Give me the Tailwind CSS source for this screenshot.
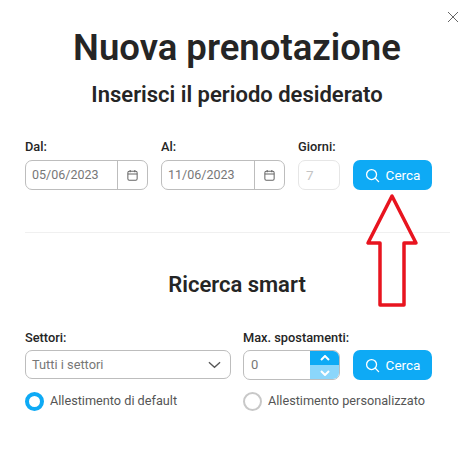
<!DOCTYPE html>
<html lang="en">
<head>
  <meta charset="UTF-8" />
  <title>Nuova prenotazione</title>
  <script src="https://cdn.jsdelivr.net/npm/@tailwindcss/browser@4"></script>
</head>
<body class="bg-white">
  <div class="relative w-[474px] h-[453px] overflow-hidden px-[25px] font-['Roboto',sans-serif] text-[#252525]">

    <!-- Close -->
    <button class="absolute top-[10px] right-[14px] w-[14px] h-[14px] text-[#666]" aria-label="Chiudi">
      <svg viewBox="0 0 14 14" class="w-[14px] h-[14px]" fill="none" stroke="currentColor" stroke-width="1"><path d="M2 2l10 10M12 2L2 12"/></svg>
    </button>

    <!-- Titles -->
    <h1 class="pt-[27px] text-center text-[36.5px] leading-[42px] font-semibold whitespace-nowrap">Nuova prenotazione</h1>
    <h2 class="mt-[12px] text-center text-[22px] leading-[28px] font-semibold">Inserisci il periodo desiderato</h2>

    <!-- Periodo -->
    <div class="mt-[30px] flex items-end">
      <div class="w-[123px] mr-[13px]">
        <label class="block text-[12.8px] leading-[15px] font-medium mb-[6px]">Dal:</label>
        <div class="flex h-[30px] border border-[#bdbdbd] rounded-[7px] text-[#777]">
          <span class="flex-1 pl-[6px] text-[12.5px] leading-[28px]">05/06/2023</span>
          <span class="w-[30px] border-l border-[#bdbdbd] flex items-center justify-center">
            <svg viewBox="0 0 14 14" class="w-[13px] h-[13px]" fill="none" stroke="#666" stroke-width="1.1"><rect x="2" y="2.5" width="10" height="9.5" rx="1.5"/><path d="M2 5.5h10M4.5 1v2.5M9.5 1v2.5"/></svg>
          </span>
        </div>
      </div>
      <div class="w-[124px] mr-[13px]">
        <label class="block text-[12.8px] leading-[15px] font-medium mb-[6px]">Al:</label>
        <div class="flex h-[30px] border border-[#bdbdbd] rounded-[7px] text-[#777]">
          <span class="flex-1 pl-[6px] text-[12.5px] leading-[28px]">11/06/2023</span>
          <span class="w-[30px] border-l border-[#bdbdbd] flex items-center justify-center">
            <svg viewBox="0 0 14 14" class="w-[13px] h-[13px]" fill="none" stroke="#666" stroke-width="1.1"><rect x="2" y="2.5" width="10" height="9.5" rx="1.5"/><path d="M2 5.5h10M4.5 1v2.5M9.5 1v2.5"/></svg>
          </span>
        </div>
      </div>
      <div class="w-[42px] mr-[13px]">
        <label class="block text-[12.8px] leading-[15px] font-medium mb-[6px]">Giorni:</label>
        <div class="h-[30px] border border-[#e6e6e6] rounded-[7px] pl-[7px] text-[13.5px] leading-[28px] text-[#c4c4c4]">7</div>
      </div>
      <button class="w-[79px] h-[30px] rounded-[7px] bg-[#0eaaf5] text-white flex items-center justify-center gap-[6px] text-[13.5px]">
        <svg viewBox="0 0 16 16" class="w-[15px] h-[15px]" fill="none" stroke="currentColor" stroke-width="1.4"><circle cx="7" cy="7" r="5.3"/><path d="M11 11l3.5 3.5" stroke-linecap="round"/></svg>
        Cerca
      </button>
    </div>

    <hr class="mt-[42px] w-[425px] border-t border-[#f0f0f0]" />

    <h2 class="mt-[38px] text-center text-[22px] leading-[28px] font-semibold">Ricerca smart</h2>

    <!-- Ricerca smart -->
    <div class="mt-[31px] flex items-start">
      <div class="w-[206px] mr-[12px]">
        <label class="block text-[12.8px] leading-[15px] font-medium mb-[5px]">Settori:</label>
        <div class="h-[29px] border border-[#bdbdbd] rounded-[7px] flex items-center justify-between pl-[6px] pr-[9px] text-[12.8px] text-[#777]">
          <span>Tutti i settori</span>
          <svg viewBox="0 0 14 8" class="w-[13px] h-[8px]" fill="none" stroke="#555" stroke-width="1.4"><path d="M1 1l6 5.5L13 1"/></svg>
        </div>
      </div>
      <div class="w-[97px] mr-[13px]">
        <label class="block text-[12.8px] leading-[15px] font-medium mb-[5px] whitespace-nowrap">Max. spostamenti:</label>
        <div class="flex h-[30px] border border-[#bdbdbd] rounded-[7px] overflow-hidden">
          <span class="flex-1 pl-[7px] text-[13px] leading-[28px] text-[#777]">0</span>
          <span class="w-[30px] -my-px -mr-px flex flex-col">
            <span class="flex-1 bg-[#0eaaf5] flex items-center justify-center">
              <svg viewBox="0 0 10 6" class="w-[10px] h-[6px]" fill="none" stroke="white" stroke-width="2"><path d="M1 5l4-4 4 4"/></svg>
            </span>
            <span class="flex-1 bg-[#8bd6fb] flex items-center justify-center">
              <svg viewBox="0 0 10 6" class="w-[10px] h-[6px]" fill="none" stroke="white" stroke-width="2"><path d="M1 1l4 4 4-4"/></svg>
            </span>
          </span>
        </div>
      </div>
      <button class="self-end w-[79px] h-[30px] rounded-[7px] bg-[#0eaaf5] text-white flex items-center justify-center gap-[6px] text-[13.5px]">
        <svg viewBox="0 0 16 16" class="w-[15px] h-[15px]" fill="none" stroke="currentColor" stroke-width="1.4"><circle cx="7" cy="7" r="5.3"/><path d="M11 11l3.5 3.5" stroke-linecap="round"/></svg>
        Cerca
      </button>
    </div>

    <!-- Allestimento -->
    <div class="mt-[11px] flex text-[12.7px] leading-[20px] text-[#555]">
      <label class="w-[218px] flex items-center gap-[6px]">
        <span class="w-[19px] h-[19px] rounded-full border-[4px] border-[#0eaaf5]"></span>
        Allestimento di default
      </label>
      <label class="flex items-center gap-[6px]">
        <span class="w-[19px] h-[19px] rounded-full border-2 border-[#c8c8c8]"></span>
        Allestimento personalizzato
      </label>
    </div>

    <!-- Red arrow drawn over the screenshot -->
    <svg class="absolute left-[360px] top-[192px] w-[64px] h-[116px]" viewBox="0 0 64 116" fill="none" stroke="#e8141f" stroke-width="3.5" stroke-linejoin="round">
      <path d="M32 4L8 51H20V113H44V51H56Z"/>
    </svg>
  </div>
</body>
</html>
